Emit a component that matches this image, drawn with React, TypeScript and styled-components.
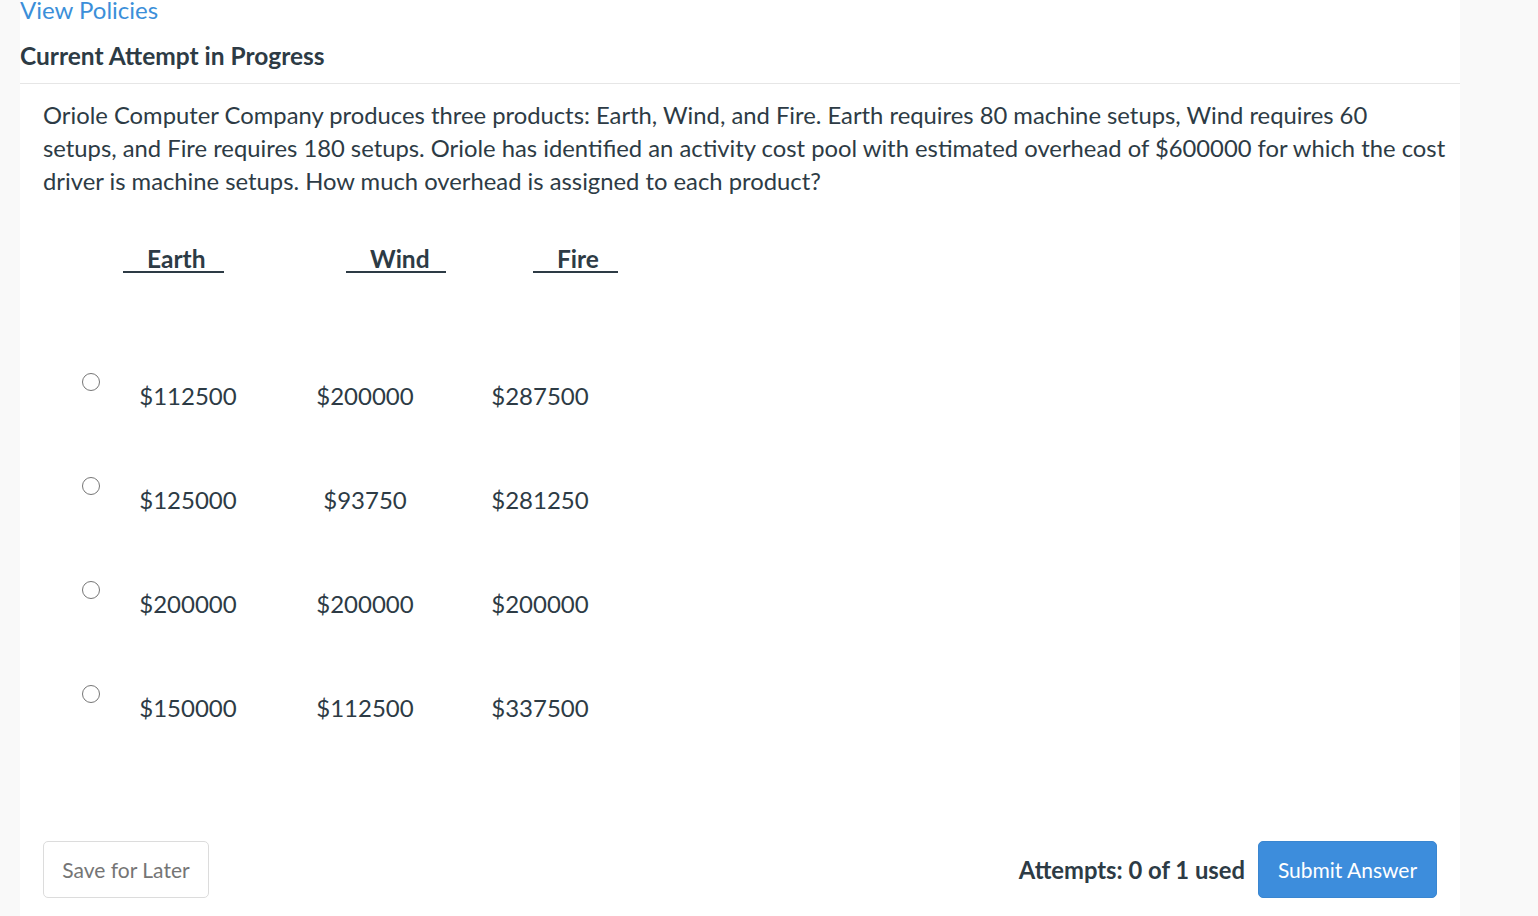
import React from "react";
import styled, { createGlobalStyle } from "styled-components";

const GlobalStyle = createGlobalStyle`
  html, body {
    margin: 0;
    padding: 0;
    background: #f9f9f9;
    font-family: Lato, "Open Sans", sans-serif;
    color: #2d3b45;
    overflow: hidden;
  }
`;

const options = [
  ["$112500", "$200000", "$287500"],
  ["$125000", "$93750", "$281250"],
  ["$200000", "$200000", "$200000"],
  ["$150000", "$112500", "$337500"],
];

const headers = [
  { label: "Earth", width: 101, gap: 0 },
  { label: "Wind", width: 100, gap: 122 },
  { label: "Fire", width: 85, gap: 87 },
];

const App: React.FC = () => {
  return (
    <>
      <GlobalStyle />
      <Page>
        <Panel>
          <TopBar>
            <PolicyLink href="#">View Policies</PolicyLink>
            <AttemptTitle>Current Attempt in Progress</AttemptTitle>
          </TopBar>
          <QuestionBody>
            <Prompt>
              Oriole Computer Company produces three products: Earth, Wind,
              and Fire. Earth requires 80 machine setups, Wind requires 60
              <br />
              setups, and Fire requires 180 setups. Oriole has identified an
              activity cost pool with estimated overhead of $600000 for which
              the cost driver is machine setups. How much overhead is assigned
              to each product?
            </Prompt>
            <HeaderRow>
              {headers.map((h) => (
                <HeaderCell key={h.label} $width={h.width} $gap={h.gap}>
                  {h.label}
                </HeaderCell>
              ))}
            </HeaderRow>
            <OptionList>
              {options.map((row, i) => (
                <OptionRow key={i}>
                  <Radio />
                  {row.map((v, j) => (
                    <Amount key={j}>{v}</Amount>
                  ))}
                </OptionRow>
              ))}
            </OptionList>
          </QuestionBody>
          <Footer>
            <SaveButton>Save for Later</SaveButton>
            <SubmitGroup>
              <AttemptsText>Attempts: 0 of 1 used</AttemptsText>
              <SubmitButton>Submit Answer</SubmitButton>
            </SubmitGroup>
          </Footer>
        </Panel>
      </Page>
    </>
  );
};

const Page = styled.div`
  min-height: 916px;
  padding-left: 20px;
`;

const Panel = styled.div`
  display: flow-root;
  width: 1440px;
  min-height: 916px;
  background: #ffffff;
`;

const TopBar = styled.div`
  border-bottom: 1px solid #e6e6e6;
  height: 87px;
  margin-top: -4px;
`;

const PolicyLink = styled.a`
  display: block;
  font-size: 24px;
  line-height: 28px;
  color: #3b8fd9;
  text-decoration: none;
`;

const AttemptTitle = styled.h2`
  margin: 18px 0 0;
  font-size: 24.5px;
  line-height: 28px;
  font-weight: 700;
  color: #2d3b45;
`;

const QuestionBody = styled.div`
  padding: 15px 23px 0;
`;

const Prompt = styled.p`
  margin: 0 -14px 0 0;
  font-size: 23.8px;
  line-height: 33px;
  color: #2d3b45;
`;

const HeaderRow = styled.div`
  display: flex;
  margin-top: 49px;
  padding-left: 80px;
`;

const HeaderCell = styled.div<{ $width: number; $gap: number }>`
  width: ${(p) => p.$width}px;
  margin-left: ${(p) => p.$gap}px;
  box-sizing: border-box;
  padding-left: 24px;
  font-size: 24.5px;
  line-height: 24px;
  font-weight: 700;
  border-bottom: 2px solid #2d3b45;
  white-space: nowrap;
`;

const OptionList = styled.div`
  display: flex;
  flex-direction: column;
  gap: 71.3px;
  margin-top: 105.5px;
  padding-left: 39px;
`;

const OptionRow = styled.div`
  display: grid;
  grid-template-columns: 28px 156px 198px 152px;
  align-items: start;
`;

const Radio = styled.span`
  display: block;
  width: 18px;
  height: 18px;
  box-sizing: border-box;
  border: 1.5px solid #767676;
  border-radius: 50%;
  margin-top: -6px;
  background: #fff;
`;

const Amount = styled.div`
  text-align: center;
  font-size: 24px;
  line-height: 33px;
  color: #2d3b45;
`;

const Footer = styled.div`
  display: flex;
  justify-content: space-between;
  align-items: center;
  margin-top: 117px;
  padding: 0 23px 0 23px;
`;

const SaveButton = styled.button`
  height: 57px;
  width: 166px;
  border: 1px solid #dcdcdc;
  border-radius: 5px;
  background: #fff;
  font-family: Lato, sans-serif;
  font-size: 21px;
  color: #757575;
  cursor: pointer;
`;

const SubmitGroup = styled.div`
  display: flex;
  align-items: center;
  gap: 13px;
`;

const AttemptsText = styled.span`
  font-size: 23.8px;
  font-weight: 700;
  color: #2d3b45;
`;

const SubmitButton = styled.button`
  height: 57px;
  width: 179px;
  border: 1px solid #3a86d0;
  border-radius: 5px;
  background: #3d8ddc;
  font-family: Lato, sans-serif;
  font-size: 21px;
  color: #ffffff;
  cursor: pointer;
`;

export default App;
